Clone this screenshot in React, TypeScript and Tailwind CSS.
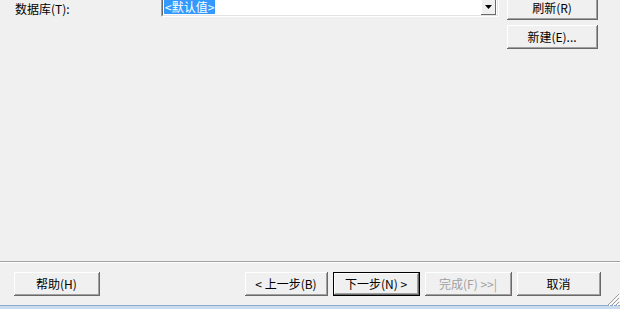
import React from "react";

const font = { fontFamily: '"Noto Sans CJK SC", "DejaVu Sans", sans-serif' };

function Btn({
  children,
  w,
  def,
  disabled,
}: {
  children: React.ReactNode;
  w: number;
  def?: boolean;
  disabled?: boolean;
}) {
  return (
    <div
      className={`h-[24px] shrink-0 ${def ? "border border-black" : ""}`}
      style={{ width: w }}
    >
      <div className="h-full w-full border-r border-b border-[#696969]">
        <div className="h-full w-full border-t border-l border-white">
          <div className="h-full w-full border-r border-b border-[#a0a0a0] bg-[#f0f0f0] flex items-center justify-center">
            <span
              className={`text-[12px] leading-none ${disabled ? "text-[#a0a0a0]" : "text-black"}`}
            >
              {children}
            </span>
          </div>
        </div>
      </div>
    </div>
  );
}

export default function App() {
  return (
    <div
      className="w-[620px] h-[309px] bg-[#f0f0f0] relative overflow-hidden flex flex-col"
      style={font}
    >
      {/* top row */}
      <div className="flex mt-[-3px]">
        <div className="w-[161px] pl-[15px] pt-[5px] text-[12px] leading-[14px] text-black">
          数据库(T):
        </div>
        {/* combobox */}
        <div className="w-[338px] h-[20px] border-t border-l border-[#a0a0a0] border-r border-b border-r-white border-b-white">
          <div className="h-full w-full border-t border-l border-[#696969] border-r border-b border-r-[#e3e3e3] border-b-[#e3e3e3] bg-white flex items-center pl-[1px] pr-[1px]">
            <div className="flex-1 flex items-center">
              <span className="bg-[#3399ff] text-white text-[12px] leading-[14px] px-[1px]">
                &lt;默认值&gt;
              </span>
            </div>
            <div className="w-[15px] h-[16px] border-r border-b border-[#696969]">
              <div className="h-full w-full border-t border-l border-white bg-[#f0f0f0] flex items-center justify-center">
                <svg width="7" height="4" viewBox="0 0 7 4">
                  <path d="M0 0h7L3.5 4z" fill="#000" />
                </svg>
              </div>
            </div>
          </div>
        </div>
        <div className="ml-[8px] flex flex-col gap-[5px] mt-[-1px]">
          <Btn w={91}>刷新(R)</Btn>
          <Btn w={91}>新建(E)...</Btn>
        </div>
      </div>

      <div className="flex-1" />

      {/* separator */}
      <div className="h-[1px] bg-[#a0a0a0]" />
      <div className="h-[1px] bg-white" />

      {/* bottom buttons */}
      <div className="flex items-start mt-[9px] h-[33px]">
        <div className="ml-[14px]">
          <Btn w={86}>帮助(H)</Btn>
        </div>
        <div className="ml-[145px] flex gap-[5px]">
          <Btn w={83}>&lt; 上一步(B)</Btn>
          <Btn w={87} def>
            下一步(N) &gt;
          </Btn>
          <Btn w={87} disabled>
            完成(F) &gt;&gt;|
          </Btn>
          <Btn w={84}>取消</Btn>
        </div>
      </div>

      {/* size grip */}
      <svg
        className="absolute right-0 bottom-[3px]"
        width="13"
        height="13"
        viewBox="0 0 13 13"
      >
        <path d="M12 1L1 12M12 5L5 12M12 9L9 12" stroke="#a0a0a0" strokeWidth="1" />
        <path d="M13 2L2 13M13 6L6 13M13 10L10 13" stroke="#ffffff" strokeWidth="1" />
      </svg>

      {/* window frame strip */}
      <div className="h-[4px] bg-[#c9dbef] border-t border-[#8fa9c9]" />
    </div>
  );
}
